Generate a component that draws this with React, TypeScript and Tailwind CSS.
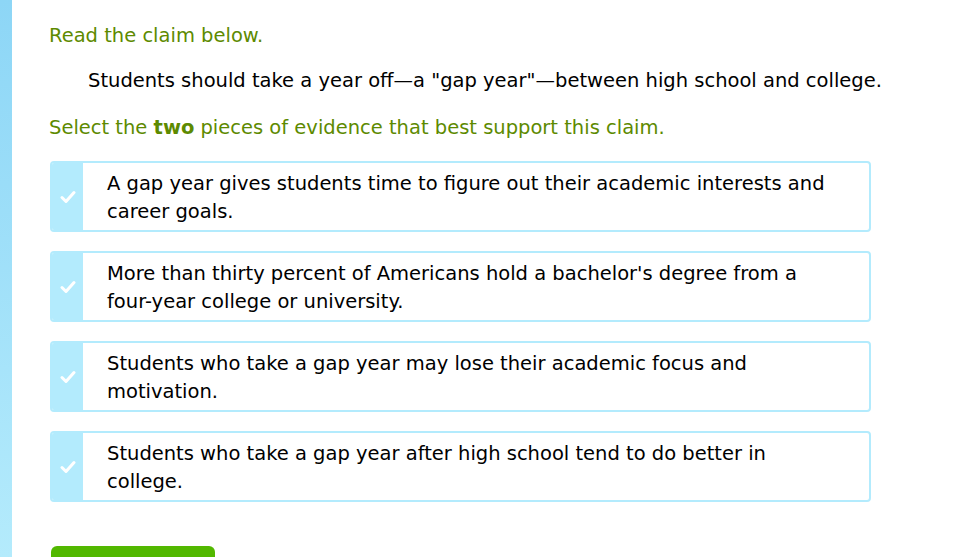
import React from "react";

const choices: string[] = [
    "A gap year gives students time to figure out their academic interests and career goals.",
    "More than thirty percent of Americans hold a bachelor's degree from a four-year college or university.",
    "Students who take a gap year may lose their academic focus and motivation.",
    "Students who take a gap year after high school tend to do better in college.",
];

const Check: React.FC = () => (
    <svg width="16" height="14" viewBox="0 0 16 14" fill="none">
        <path d="M2 7.5 L6 11.5 L14 2.5" stroke="white" strokeWidth="3" strokeLinecap="round" strokeLinejoin="round" />
    </svg>
);

const App: React.FC = () => {
    return (
        <div className="flex h-[557px] w-[960px] overflow-hidden bg-white" style={{ fontFamily: '"DejaVu Sans", Verdana, sans-serif' }}>
            <div className="w-[12px] shrink-0 bg-gradient-to-b from-[#8dd6f6] to-[#b4ebfc]"></div>
            <div className="flex flex-col pl-[37px] pt-[24px] text-[19.5px]">
                <p className="leading-[24px] text-[#5d8a00]">Read the claim below.</p>
                <p className="mt-[21px] pl-[39px] leading-[24px] text-black">
                    Students should take a year off—a "gap year"—between high school and college.
                </p>
                <p className="mt-[23px] leading-[24px] text-[#5d8a00]">
                    Select the <b className="font-bold">two</b> pieces of evidence that best support this claim.
                </p>
                <div className="mt-[21px] flex flex-col gap-[19px] pl-[1px]">
                    {choices.map((c) => (
                        <div key={c} className="flex h-[71px] w-[821px] overflow-hidden rounded-[4px] border-2 border-[#b3ebfd] bg-white">
                            <div className="flex w-[31px] shrink-0 items-center justify-center bg-[#b3ebfd]">
                                <Check />
                            </div>
                            <div className="flex items-start pl-[24px] pr-[40px] pt-[7px] text-[19.5px] leading-[28px] text-black">
                                {c}
                            </div>
                        </div>
                    ))}
                </div>
                <div className="ml-[2px] mt-[44px] h-[20px] w-[164px] rounded-t-[6px] bg-[#52b800]"></div>
            </div>
        </div>
    );
};

export default App;
